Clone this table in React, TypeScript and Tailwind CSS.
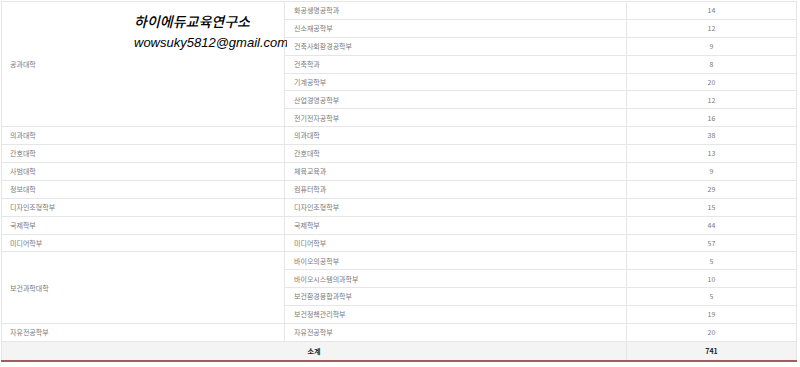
import React from "react";

type Row = { college?: string; span?: number; dept: string; count: number };

const rows: Row[] = [
  { college: "공과대학", span: 7, dept: "화공생명공학과", count: 14 },
  { dept: "신소재공학부", count: 12 },
  { dept: "건축사회환경공학부", count: 9 },
  { dept: "건축학과", count: 8 },
  { dept: "기계공학부", count: 20 },
  { dept: "산업경영공학부", count: 12 },
  { dept: "전기전자공학부", count: 16 },
  { college: "의과대학", span: 1, dept: "의과대학", count: 38 },
  { college: "간호대학", span: 1, dept: "간호대학", count: 13 },
  { college: "사범대학", span: 1, dept: "체육교육과", count: 9 },
  { college: "정보대학", span: 1, dept: "컴퓨터학과", count: 29 },
  { college: "디자인조형학부", span: 1, dept: "디자인조형학부", count: 15 },
  { college: "국제학부", span: 1, dept: "국제학부", count: 44 },
  { college: "미디어학부", span: 1, dept: "미디어학부", count: 57 },
  { college: "보건과학대학", span: 4, dept: "바이오의공학부", count: 5 },
  { dept: "바이오시스템의과학부", count: 10 },
  { dept: "보건환경융합과학부", count: 5 },
  { dept: "보건정책관리학부", count: 19 },
  { college: "자유전공학부", span: 1, dept: "자유전공학부", count: 20 },
];

const cell = "border border-[#e6e6e6] h-[17.9px] p-0 align-middle";

export default function App() {
  return (
    <div className="w-[800px] h-[367px] bg-white overflow-hidden font-['Noto_Sans_CJK_KR',sans-serif]">
      <table className="ml-[1px] mt-[1px] w-[795px] border-collapse table-fixed text-[7px] text-[#7a7a7a] border-b-2 border-b-[#a45a5e]">
        <tbody>
          {rows.map((r, i) => (
            <tr key={i}>
              {r.college && (
                <td
                  rowSpan={r.span}
                  className={`${cell} pl-[8px] relative ${i === 0 ? "w-[283px]" : ""}`}
                >
                  {i === 0 && (
                    <div className="absolute left-[132px] top-[9px] w-[153px] overflow-hidden whitespace-nowrap text-black italic leading-[21px]">
                      <div className="text-[14px] font-medium font-['Noto_Sans_CJK_KR',sans-serif]">하이에듀교육연구소</div>
                      <div className="text-[13px] font-['Liberation_Sans',sans-serif]">wowsuky5812@gmail.com</div>
                    </div>
                  )}
                  {r.college}
                </td>
              )}
              <td className={`${cell} pl-[9px] ${i === 0 ? "w-[342px]" : ""}`}>{r.dept}</td>
              <td className={`${cell} text-center ${i === 0 ? "w-[170px]" : ""}`}>{r.count}</td>
            </tr>
          ))}
          <tr className="bg-[#f4f4f4]">
            <td colSpan={2} className={`${cell} h-[20px] text-center font-bold text-[#222]`}>
              소계
            </td>
            <td className={`${cell} h-[20px] text-center font-bold text-[#222]`}>741</td>
          </tr>
        </tbody>
      </table>
    </div>
  );
}
